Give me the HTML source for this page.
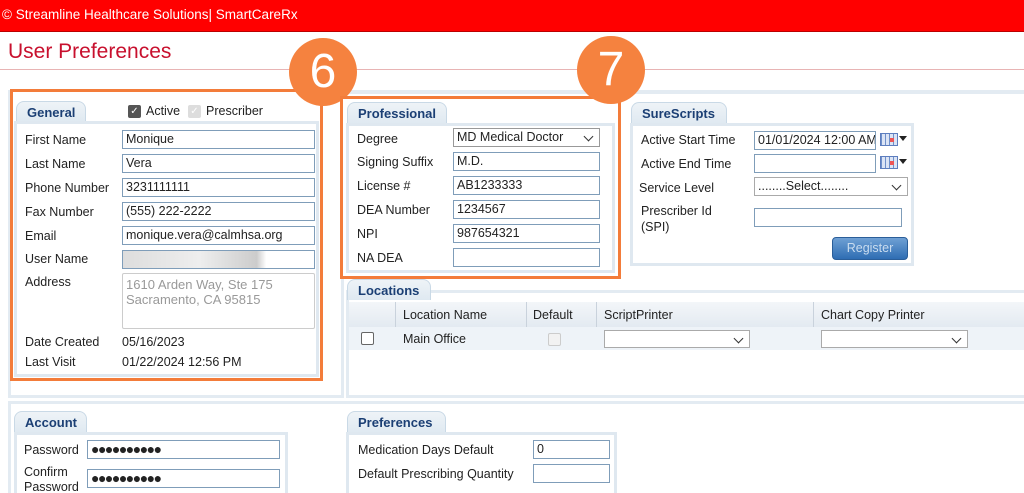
<!DOCTYPE html>
<html><head><meta charset="utf-8"><style>
*{box-sizing:border-box;margin:0;padding:0}
html{width:1024px;height:493px;overflow:hidden}
body{width:1024px;height:493px;overflow:hidden;background:#fff;font-family:"Liberation Sans",Arial,sans-serif;font-size:12.5px;color:#222;position:relative}
.a{position:absolute}
.bar{left:0;top:0;width:1024px;height:32px;background:#f00;border-bottom:1px solid #b00;color:#fff;font-size:13.5px;padding:7px 0 0 2px}
.title{left:8px;top:40px;color:#c8102e;font-size:21px}
.sep{left:0;top:69px;width:1024px;height:1px;background:#e8b4b4}
.tab{background:linear-gradient(#eef3f7,#dfe9f1);border:1px solid #c9d9e6;border-bottom:none;border-radius:8px 8px 0 0;color:#1b3f74;font-weight:bold;font-size:13px;padding:3px 0 0 10px}
.pan{border:3px solid #dfe8f0;background:#fff}
.in{border:1px solid #7f9db9;height:19px;background:#fff;padding:1px 3px;font-size:12.5px;white-space:nowrap;overflow:hidden}
.sel:after{content:"";position:absolute;right:7px;top:4px;width:6px;height:6px;border-right:1px solid #333;border-bottom:1px solid #333;transform:rotate(45deg)}
.org{border:3px solid #f37c3a}
.circ{width:68px;height:68px;border-radius:50%;background:#f5823f;color:#fff;font-size:48px;text-align:center;line-height:68px}
.cal{width:18px;height:13px;background:repeating-linear-gradient(90deg,#6f8fc9 0 1px,#dbe4f5 1px 4px);border:1px solid #5d7ebf}
.cal:after{content:"";position:absolute;left:9px;top:4px;width:4px;height:4px;background:#e55}
.tri{width:0;height:0;border-left:4px solid transparent;border-right:4px solid transparent;border-top:5px solid #222}
.cb{width:13px;height:13px;border:1px solid #666;border-radius:2px;background:#fff}
.pw{font-size:14px;letter-spacing:-1.5px;line-height:15px}
</style></head><body>
<div class="a bar">© Streamline Healthcare Solutions| SmartCareRx</div>
<div class="a title">User Preferences</div>
<div class="a sep"></div>
<div class="a" style="left:8px;top:90px;width:1016px;height:4px;background:#e3ebf2"></div>

<!-- General outer gray -->
<div class="a" style="left:8px;top:90px;width:336px;height:308px;border:3px solid #e3ebf2;border-top:none"></div>
<div class="a org" style="left:10px;top:89px;width:313px;height:292px;background:#fff"></div>
<div class="a tab" style="left:16px;top:101px;width:70px;height:21px">General</div>
<div class="a cb" style="left:128px;top:105px;background:#555;border-color:#555;color:#fff;font-size:10px;line-height:11px;text-align:center">✓</div>
<div class="a" style="left:146px;top:104px">Active</div>
<div class="a cb" style="left:188px;top:105px;background:#ddd;border-color:#ddd;color:#fff;font-size:10px;line-height:11px;text-align:center">✓</div>
<div class="a" style="left:206px;top:104px">Prescriber</div>
<div class="a pan" style="left:14px;top:121px;width:305px;height:256px"></div>
<div class="a" style="left:25px;top:133px">First Name</div><div class="a in" style="left:122px;top:130px;width:193px">Monique</div>
<div class="a" style="left:25px;top:157px">Last Name</div><div class="a in" style="left:122px;top:154px;width:193px">Vera</div>
<div class="a" style="left:25px;top:181px">Phone Number</div><div class="a in" style="left:122px;top:178px;width:193px">3231111111</div>
<div class="a" style="left:25px;top:205px">Fax Number</div><div class="a in" style="left:122px;top:202px;width:193px">(555) 222-2222</div>
<div class="a" style="left:25px;top:229px">Email</div><div class="a in" style="left:122px;top:226px;width:193px">monique.vera@calmhsa.org</div>
<div class="a" style="left:25px;top:252px">User Name</div><div class="a in" style="left:122px;top:250px;width:193px;background:linear-gradient(90deg,#ddd,#eee 40%,#ccc 70%,#fff 75%)"></div>
<div class="a" style="left:25px;top:275px">Address</div>
<div class="a" style="left:122px;top:273px;width:193px;height:56px;border:1px solid #ccc;border-radius:2px;color:#999;padding:3px 3px;line-height:15px;font-size:13px">1610 Arden Way, Ste 175<br>Sacramento, CA 95815</div>
<div class="a" style="left:25px;top:335px">Date Created</div><div class="a" style="left:122px;top:335px">05/16/2023</div>
<div class="a" style="left:25px;top:355px">Last Visit</div><div class="a" style="left:122px;top:355px">01/22/2024 12:56 PM</div>
<div class="a circ" style="left:289px;top:38px">6</div>

<!-- Professional -->
<div class="a org" style="left:340px;top:96px;width:281px;height:183px;background:#fff"></div>
<div class="a tab" style="left:347px;top:102px;width:100px;height:22px">Professional</div>
<div class="a pan" style="left:346px;top:123px;width:269px;height:150px"></div>
<div class="a" style="left:357px;top:132px">Degree</div><div class="a in sel" style="left:453px;top:128px;width:147px;border-color:#999">MD Medical Doctor</div>
<div class="a" style="left:357px;top:155px">Signing Suffix</div><div class="a in" style="left:453px;top:152px;width:147px">M.D.</div>
<div class="a" style="left:357px;top:179px">License #</div><div class="a in" style="left:453px;top:176px;width:147px">AB1233333</div>
<div class="a" style="left:357px;top:203px">DEA Number</div><div class="a in" style="left:453px;top:200px;width:147px">1234567</div>
<div class="a" style="left:357px;top:227px">NPI</div><div class="a in" style="left:453px;top:224px;width:147px">987654321</div>
<div class="a" style="left:357px;top:251px">NA DEA</div><div class="a in" style="left:453px;top:248px;width:147px"></div>
<div class="a circ" style="left:577px;top:36px">7</div>

<!-- SureScripts -->
<div class="a tab" style="left:631px;top:102px;width:96px;height:22px">SureScripts</div>
<div class="a pan" style="left:630px;top:123px;width:284px;height:143px"></div>
<div class="a" style="left:641px;top:133px">Active Start Time</div><div class="a in" style="left:754px;top:131px;width:122px">01/01/2024 12:00 AM</div>
<div class="a cal" style="left:880px;top:133px"></div><div class="a tri" style="left:899px;top:136px"></div>
<div class="a" style="left:641px;top:157px">Active End Time</div><div class="a in" style="left:754px;top:154px;width:122px"></div>
<div class="a cal" style="left:880px;top:156px"></div><div class="a tri" style="left:899px;top:159px"></div>
<div class="a" style="left:639px;top:181px">Service Level</div><div class="a in sel" style="left:754px;top:177px;width:154px;border-color:#aaa">........Select........</div>
<div class="a" style="left:641px;top:203px;line-height:16px">Prescriber Id<br>(SPI)</div><div class="a in" style="left:754px;top:208px;width:148px"></div>
<div class="a" style="left:832px;top:237px;width:76px;height:23px;border-radius:4px;background:linear-gradient(#6fa0d4,#2e6db3);border:1px solid #2a5e99;color:#c9dcef;text-align:center;line-height:21px">Register</div>

<!-- Locations -->
<div class="a" style="left:346px;top:290px;width:690px;height:108px;border:3px solid #e3ebf2;border-right:none"></div>
<div class="a tab" style="left:347px;top:279px;width:84px;height:21px">Locations</div>
<div class="a" style="left:349px;top:302px;width:675px;height:25px;background:linear-gradient(#f3f6f9,#e3eaf1)"></div>
<div class="a" style="left:349px;top:327px;width:675px;height:23px;background:#eef3f8"></div>
<div class="a" style="left:395px;top:302px;width:1px;height:25px;background:#c9d2dc"></div>
<div class="a" style="left:526px;top:302px;width:1px;height:25px;background:#c9d2dc"></div>
<div class="a" style="left:596px;top:302px;width:1px;height:25px;background:#c9d2dc"></div>
<div class="a" style="left:813px;top:302px;width:1px;height:25px;background:#c9d2dc"></div>
<div class="a" style="left:403px;top:308px">Location Name</div>
<div class="a" style="left:533px;top:308px">Default</div>
<div class="a" style="left:604px;top:308px">ScriptPrinter</div>
<div class="a" style="left:821px;top:308px">Chart Copy Printer</div>
<div class="a cb" style="left:361px;top:332px"></div>
<div class="a" style="left:403px;top:332px">Main Office</div>
<div class="a cb" style="left:548px;top:333px;border-color:#ccc;background:#f2f2f2"></div>
<div class="a in sel" style="left:604px;top:330px;width:146px;height:18px;border-color:#aaa"></div>
<div class="a in sel" style="left:821px;top:330px;width:147px;height:18px;border-color:#aaa"></div>

<!-- bottom -->
<div class="a" style="left:8px;top:401px;width:1016px;height:3px;background:#e3ebf2"></div>
<div class="a" style="left:8px;top:401px;width:3px;height:92px;background:#e3ebf2"></div>
<div class="a tab" style="left:14px;top:411px;width:73px;height:22px">Account</div>
<div class="a pan" style="left:14px;top:432px;width:274px;height:61px;border-bottom:none"></div>
<div class="a" style="left:24px;top:443px">Password</div><div class="a in pw" style="left:87px;top:440px;width:193px">●●●●●●●●●●</div>
<div class="a" style="left:24px;top:465px;line-height:15px">Confirm<br>Password</div><div class="a in pw" style="left:87px;top:469px;width:193px">●●●●●●●●●●</div>
<div class="a tab" style="left:347px;top:411px;width:99px;height:22px">Preferences</div>
<div class="a pan" style="left:346px;top:432px;width:271px;height:61px;border-bottom:none"></div>
<div class="a" style="left:358px;top:443px">Medication Days Default</div><div class="a in" style="left:533px;top:440px;width:77px">0</div>
<div class="a" style="left:358px;top:467px">Default Prescribing Quantity</div><div class="a in" style="left:533px;top:464px;width:77px"></div>
</body></html>
